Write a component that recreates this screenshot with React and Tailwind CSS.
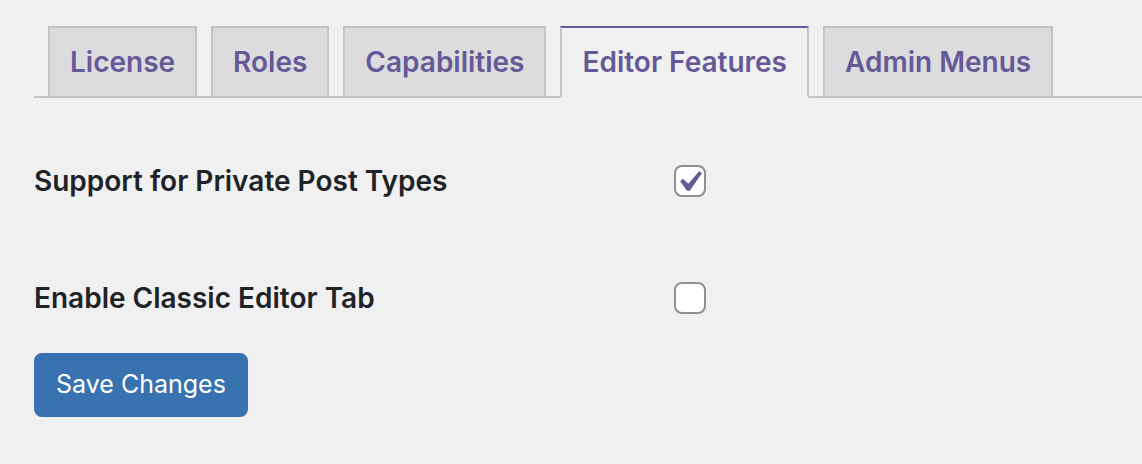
import { useState } from 'react';

const tabs = ['License', 'Roles', 'Capabilities', 'Editor Features', 'Admin Menus'];

function Checkbox({ checked, onChange }) {
  return (
    <button
      type="button"
      role="checkbox"
      aria-checked={checked}
      onClick={onChange}
      className="relative h-[32px] w-[32px] rounded-[8px] border-2 border-[#8c8f94] bg-white"
    >
      {checked && (
        <svg
          viewBox="0 0 20 20"
          className="absolute left-[-8px] top-[-6px] h-[42px] w-[42px]"
          aria-hidden="true"
        >
          <path
            fill="#655997"
            d="M14.83 4.89l1.34.94-5.81 8.38H9.02L5.78 9.67l1.34-1.25 2.57 2.4z"
          />
        </svg>
      )}
    </button>
  );
}

export default function App() {
  const [privateTypes, setPrivateTypes] = useState(true);
  const [classicTab, setClassicTab] = useState(false);

  return (
    <div className="min-h-[464px] bg-[#f0f0f1] pl-[34px] pt-[26px] font-['Inter',sans-serif]">
      <nav className="flex border-b-2 border-[#c3c4c7]">
        {tabs.map((tab) => {
          const active = tab === 'Editor Features';
          return (
            <a
              key={tab}
              href="#"
              className={
                active
                  ? 'ml-[14px] -mb-[2px] border-2 border-[#c3c4c7] border-t-[#655997] border-b-[#f0f0f1] bg-[#f0f0f1] px-[20px] pb-[10px] pt-[11px] text-[28px] font-semibold leading-[47px] text-[#655997]'
                  : 'ml-[14px] -mb-[2px] border-2 border-[#c3c4c7] bg-[#dcdcde] px-[20px] pb-[10px] pt-[11px] text-[28px] font-semibold leading-[47px] text-[#655997]'
              }
            >
              {tab}
            </a>
          );
        })}
      </nav>

      <div className="pt-[67px]">
        <div className="flex h-[32px] items-center">
          <span className="w-[640px] text-[28px] font-semibold text-[#1d2327]">
            Support for Private Post Types
          </span>
          <Checkbox checked={privateTypes} onChange={() => setPrivateTypes((v) => !v)} />
        </div>

        <div className="mt-[85px] flex h-[32px] items-center">
          <span className="w-[640px] text-[28px] font-semibold text-[#1d2327]">
            Enable Classic Editor Tab
          </span>
          <Checkbox checked={classicTab} onChange={() => setClassicTab((v) => !v)} />
        </div>

        <button
          type="submit"
          className="mt-[39px] h-[64px] rounded-[8px] border-2 border-[#3872b0] bg-[#3872b0] px-[20px] text-[25px] text-white"
        >
          Save Changes
        </button>
      </div>
    </div>
  );
}
